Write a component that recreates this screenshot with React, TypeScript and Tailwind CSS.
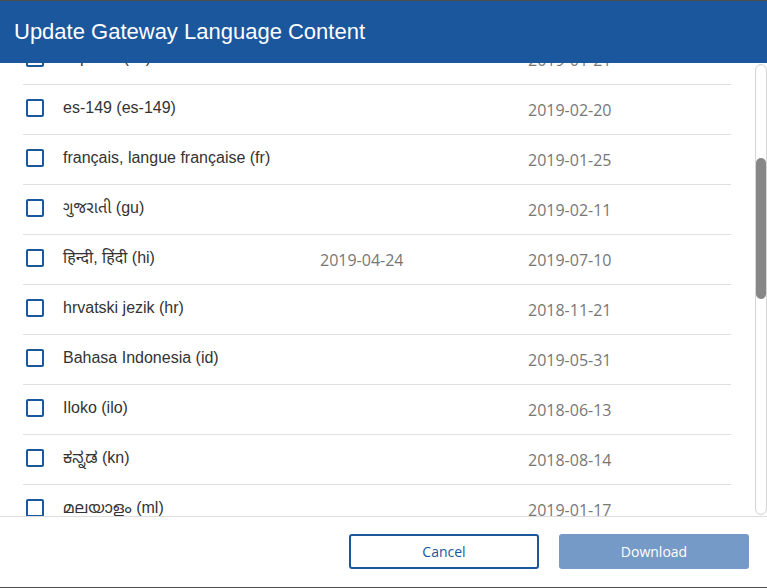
import React, { useEffect, useRef } from "react";

type Row = { name: string; d1?: string; d2: string };

const rows: Row[] = [
  { name: "አማርኛ (am)", d2: "2019-02-14" },
  { name: "العربية (ar)", d2: "2018-12-03" },
  { name: "অসমীয়া (as)", d2: "2019-03-02" },
  { name: "বাংলা (bn)", d2: "2019-01-08" },
  { name: "Cebuano (ceb)", d2: "2018-10-22" },
  { name: "español (es)", d2: "2019-01-21" },
  { name: "es-149 (es-149)", d2: "2019-02-20" },
  { name: "français, langue française (fr)", d2: "2019-01-25" },
  { name: "ગુજરાતી (gu)", d2: "2019-02-11" },
  { name: "हिन्दी, हिंदी (hi)", d1: "2019-04-24", d2: "2019-07-10" },
  { name: "hrvatski jezik (hr)", d2: "2018-11-21" },
  { name: "Bahasa Indonesia (id)", d2: "2019-05-31" },
  { name: "Iloko (ilo)", d2: "2018-06-13" },
  { name: "ಕನ್ನಡ (kn)", d2: "2018-08-14" },
  { name: "മലയാളം (ml)", d2: "2019-01-17" },
  { name: "मराठी (mr)", d2: "2019-02-05" },
  { name: "नेपाली (ne)", d2: "2018-12-19" },
  { name: "ଓଡ଼ିଆ (or)", d2: "2019-03-11" },
  { name: "ਪੰਜਾਬੀ (pa)", d2: "2019-01-30" },
  { name: "português (pt-br)", d2: "2019-04-02" },
  { name: "русский язык (ru)", d2: "2018-09-27" },
  { name: "Kiswahili (sw)", d2: "2019-02-28" },
  { name: "தமிழ் (ta)", d2: "2019-01-14" },
  { name: "తెలుగు (te)", d2: "2019-03-19" },
  { name: "Wikang Tagalog (tl)", d2: "2018-11-07" },
  { name: "Tok Pisin (tpi)", d2: "2019-02-22" },
  { name: "اردو (ur)", d2: "2019-05-09" },
  { name: "中文 (zh)", d2: "2019-01-03" },
];

const nameFont =
  '"Liberation Sans", Arial, "Noto Sans", "Noto Sans Devanagari", "Noto Sans Gujarati", "Noto Sans Kannada", "Noto Sans Malayalam", "Noto Sans CJK SC", sans-serif';

export default function App() {
  const ref = useRef<HTMLDivElement>(null);
  useEffect(() => {
    if (ref.current) ref.current.scrollTop = 298;
  }, []);

  return (
    <div className="w-full h-[588px] flex flex-col bg-white border-y border-[#4d4d4d]">
      <div className="h-[62px] shrink-0 bg-[#1b579d] px-[14px] flex items-center">
        <h1
          className="text-white text-[22px] leading-none"
          style={{ fontFamily: '"Liberation Sans", Arial, sans-serif' }}
        >
          Update Gateway Language Content
        </h1>
      </div>

      <div className="flex-1 min-h-0 flex">
        <div ref={ref} className="flex-1 min-w-0 overflow-hidden">
          <div className="pl-[23px] pr-[24px] pt-[20px] pb-[16px]">
            {rows.map((r, i) => (
              <div
                key={i}
                className="h-[50px] border-b border-[#e0e0e0] grid grid-cols-[40px_257px_208px_1fr] items-center"
              >
                <div className="pl-[3px] mb-[4px]">
                  <div className="w-[18px] h-[18px] border-2 border-[#1b579d] rounded-[2px]" />
                </div>
                <div
                  className="mb-[4px] text-[16px] text-[#333333] whitespace-nowrap"
                  style={{ fontFamily: nameFont }}
                >
                  {r.name}
                </div>
                <div
                  className="text-[16px] text-[#777777]"
                  style={{ fontFamily: '"Open Sans", sans-serif' }}
                >
                  {r.d1 ?? ""}
                </div>
                <div
                  className="text-[16px] text-[#777777]"
                  style={{ fontFamily: '"Open Sans", sans-serif' }}
                >
                  {r.d2}
                </div>
              </div>
            ))}
          </div>
        </div>
        <div className="w-[12px] shrink-0 py-[1px]">
          <div className="h-full rounded-[6px] border border-[#d6d6d6] shadow-[inset_0_0_1px_rgba(0,0,0,0.15)] flex flex-col">
            <div className="h-[93px] shrink-0" />
            <div className="h-[141px] shrink-0 rounded-[6px] bg-[#878787]" />
          </div>
        </div>
      </div>

      <div
        className="h-[71px] shrink-0 border-t border-[#dddddd] flex items-center justify-end gap-[20px] pr-[18px] pb-[2px]"
        style={{ fontFamily: '"Open Sans", sans-serif' }}
      >
        <button className="w-[190px] h-[35px] border-2 border-[#1b579d] rounded-[3px] text-[#1b579d] text-[14px] bg-white">
          Cancel
        </button>
        <button className="w-[190px] h-[35px] rounded-[3px] bg-[#769ac7] text-white text-[14px]">
          Download
        </button>
      </div>
    </div>
  );
}
